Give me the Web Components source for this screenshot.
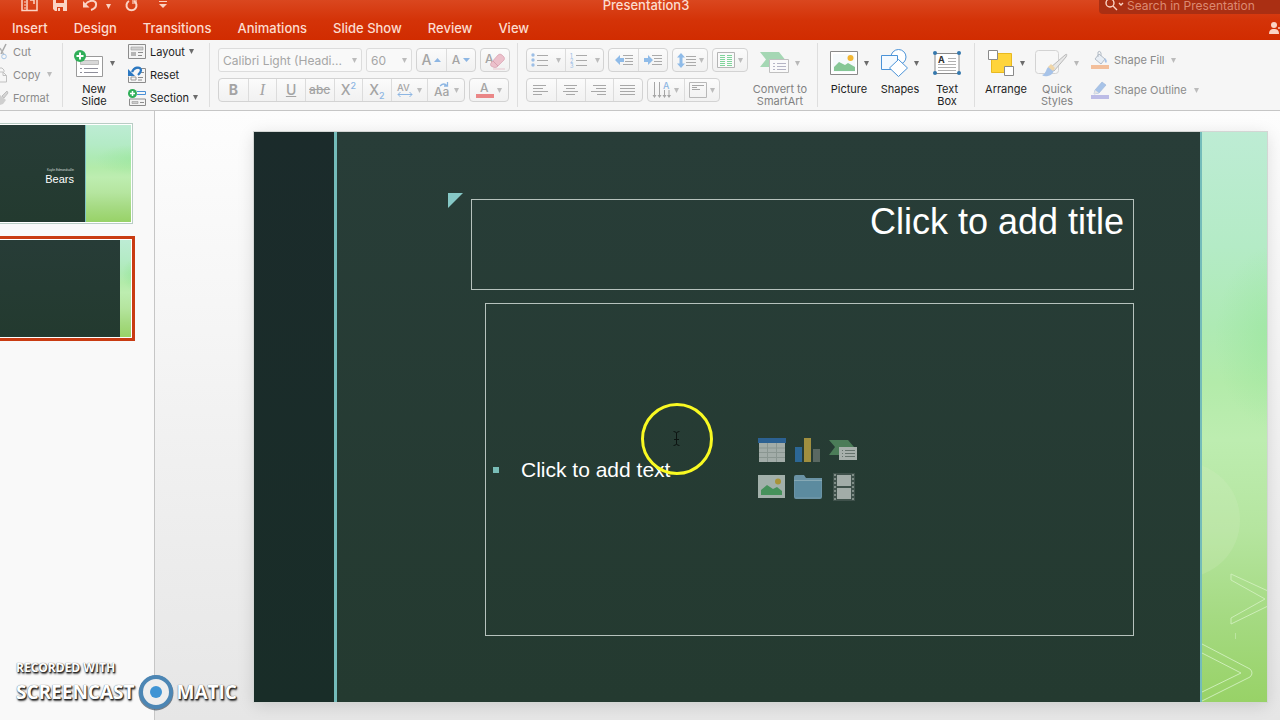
<!DOCTYPE html>
<html lang="en">
<head>
<meta charset="utf-8">
<title>Presentation3</title>
<style>
  html, body { margin: 0; min-height: 100%; }
  body { font-family: Inter, Roboto, "Liberation Sans", sans-serif; font-size: 11px; background: #f6f6f6; }
</style>
</head>
<body>
<deck-app></deck-app>
<script>
/* name: [width, height, markup] */
const ICONS = {
  caret: [5, 5, '<path d="M0 0h5L2.500 5z" fill="currentColor"/>'],
  window: [17, 12, '<path d="M1 -3h15v13.500H1zM6 -3v13.500" fill="none" stroke="#fbd3c4" stroke-width="1.500"/><path d="M3 2h2M3 5h2M3 8h2" stroke="#fbd3c4"/><path d="M9 0h4v4" stroke="#fbd3c4" stroke-width="1.500" fill="none"/>'],
  save: [14, 12, '<path d="M0 -3h14V11H2L0 9z" fill="#fbd3c4"/><path d="M3 -2h8v5H3z" fill="#d73d14"/><path d="M4 7h6v4H4z" fill="#d73d14"/><path d="M5 8h2v3H5z" fill="#fbd3c4"/>'],
  undo: [17, 12, '<path d="M1 1v6.500h6.500z" fill="#fbd3c4"/><path d="M3 5C7 -1 15 0 14 5c0 2-2 4-5 5" fill="none" stroke="#fbd3c4" stroke-width="2"/>'],
  redo: [14, 12, '<path d="M9 1a5 5 0 1 1-5 0" fill="none" stroke="#fbd3c4" stroke-width="2"/><path d="M7 -2h5v6h-5z" fill="#fbd3c4" opacity=".6"/>'],
  more: [10, 12, '<path d="M1 1.500h8" stroke="#fbd3c4"/><path d="M1 4h8L5 8z" fill="#fbd3c4"/>'],
  search: [20, 12, '<circle cx="5" cy="3" r="4" fill="none" stroke="#fbd3c4" stroke-width="1.400"/><path d="M8 6l4 4M14 3l2 2 2-2" fill="none" stroke="#fbd3c4" stroke-width="1.400"/>'],
  person: [11, 12, '<circle cx="5" cy="3" r="3" fill="#fbd3c4"/><path d="M0 12c0-4 2-5 5-5s5 1 5 5z" fill="#fbd3c4"/><path d="M9 6h3" stroke="#fbd3c4" stroke-width="1.500"/>'],
  cut: [8, 16, '<path d="M6 0L1 10" stroke="#a8a8a8" stroke-width="1.500"/><path d="M0 4l4 7" stroke="#b5b5b5" stroke-width="1.500"/><circle cx="4" cy="12.500" r="2.300" fill="none" stroke="#a9c7e6"/>'],
  copy: [8, 16, '<path d="M0 1h2l2 2v2M-2 5h5l3.500 3.500V15H-2" fill="none" stroke="#c0c0c0"/><path d="M3 5v3.500h3.500" fill="none" stroke="#c0c0c0"/>'],
  format: [8, 16, '<path d="M7 1L2 6l2 2 4-5z" fill="#d5d5d5" stroke="#b5b5b5" stroke-width=".8"/><path d="M0 5l6 5-3 4-3 1z" fill="#cfcfcf"/>'],
  newslide: [30, 27, '<path d="M2.500 6.500h26v20h-26z" fill="#fff" stroke="#9a9a9a"/><path d="M6.500 10.500h18v4h-18z" fill="#d8d8d8" stroke="#bdbdbd"/><path d="M6 18.500h2m2 0h14M6 22.500h2m2 0h14" stroke="#8e8e9a"/><circle cx="6" cy="6" r="6" fill="#2fae58"/><path d="M6 2.500v7M2.500 6h7" stroke="#fff" stroke-width="2"/>'],
  layout: [18, 15, '<path d="M.5.5h17v14H.5z" fill="#f4f4f4" stroke="#8c8c8c"/><path d="M3 3h12v3H3z" fill="#cfcfcf" stroke="#9a9a9a" stroke-width=".6"/><path d="M3 8h5v4H3z" fill="#b5b5b5"/><path d="M10 8.500h5M10 11.500h4" stroke="#8c8c8c"/>'],
  reset: [18, 17, '<path d="M5.500 2.500h12v14H.5v-6" fill="none" stroke="#8c8c8c"/><path d="M3 11h5v3H3z" fill="none" stroke="#9a9a9a"/><path d="M10 11.500h5M10 14h4M13 6.500h3" stroke="#8c8c8c"/><path d="M0 3v7h7z" fill="#2b78c2"/><path d="M4 6C6 1 12 0 13 4c0 2-1 3-3 5" fill="none" stroke="#2b78c2" stroke-width="2.200"/>'],
  section: [18, 17, '<path d="M9 2.500h8.500v3H9" fill="none" stroke="#4a90d6"/><path d="M1.500 10v6.500h16v-6.500z" fill="#f4f4f4" stroke="#8c8c8c"/><path d="M4 12.500h6v2H4z" fill="#ccc" stroke="#999" stroke-width=".6"/><path d="M12 13.500h4" stroke="#8c8c8c"/><circle cx="4.500" cy="4.500" r="4.500" fill="#2fae58"/><path d="M4.500 2v5M2 4.500h5" stroke="#fff" stroke-width="1.500"/>'],
  up: [7, 4, '<path d="M0 4h7L3.500 0z" fill="#8db6e3"/>'],
  down: [7, 4, '<path d="M0 0h7L3.500 4z" fill="#8db6e3"/>'],
  eraser: [20, 19, '<text x="0" y="12" font-size="12" font-weight="500" fill="#a4a4a4">A</text><path d="M6 12l7-8q2-2 4 0l2 2q1 2 0 3l-7 7q-2 1-4 0l-2-1q-1-1 0-3z" fill="#ecc0cb" stroke="#d7a0b0" stroke-width=".7"/><path d="M8 10l5 5" stroke="#d7a0b0"/><path d="M8 18h12" stroke="#e7c7cf"/>'],
  spacing: [17, 17, '<text x="0" y="9" font-size="9.500" font-weight="500" fill="#a4a4a4">AV</text><path d="M1 12.500h14M3.500 10L1 12.500 3.500 15M12.500 10l2.500 2.500-2.500 2.500" fill="none" stroke="#8db6e3"/>'],
  case: [17, 17, '<text x="0" y="14" font-size="12" font-weight="500" fill="#a4a4a4">Aa</text><path d="M6 4q4-4 7 0m-3 0h3.500V0" fill="none" stroke="#8db6e3" stroke-width="1.300"/>'],
  color: [18, 18, '<text x="4" y="11" font-size="12" font-weight="500" fill="#a4a4a4">A</text><path d="M0 13h18v4H0z" fill="#ea8686"/>'],
  bullets: [17, 15, '<g fill="#9dbfe6"><circle cx="2" cy="2" r="1.700"/><circle cx="2" cy="7" r="1.700"/><circle cx="2" cy="12" r="1.700"/></g><path d="M6 2.500h11M6 7.500h11M6 12.500h11" stroke="#aaa"/>'],
  numbers: [17, 15, '<g fill="#9dbfe6" font-size="5.500"><text x="0" y="4.500">1</text><text x="0" y="9.500">2</text><text x="0" y="14.500">3</text></g><path d="M6 2.500h11M6 7.500h11M6 12.500h11" stroke="#aaa"/>'],
  outdent: [18, 12, '<path d="M0 6l5-5v3h4v4H5v3z" fill="#8fbbe8"/><path d="M8 1.500h10M10 4.500h8M10 7.500h8M8 10.500h10" stroke="#aaa"/>'],
  indent: [18, 12, '<path d="M9 6L4 1v3H0v4h4v3z" fill="#8fbbe8"/><path d="M8 1.500h10M10 4.500h8M10 7.500h8M8 10.500h10" stroke="#aaa"/>'],
  leading: [19, 15, '<path d="M4 0l4 4.500H5.500v6H8L4 15 0 10.500h2.500v-6H0z" fill="#8fbbe8"/><path d="M9 3.500h10M9 6.500h10M9 9.500h10M9 12.500h10" stroke="#aaa"/>'],
  columns: [18, 16, '<path d="M.5.5h17v15H.5z" fill="#fafafa" stroke="#b5b5b5"/><path d="M3 3.500h5M3 5.500h5M3 7.500h5M3 9.500h5M3 11.500h5M3 13.500h5M10 3.500h5M10 5.500h5M10 7.500h5M10 9.500h5M10 11.500h5M10 13.500h5" stroke="#7fd49a"/>'],
  left: [16, 11, '<path d="M0 .5h13M0 3.500h10M0 6.500h15M0 9.500h9" stroke="#a8a8a8"/>'],
  center: [16, 11, '<path d="M1 .5h13M3 3.500h9M0 6.500h15M3 9.500h9" stroke="#a8a8a8"/>'],
  right: [16, 11, '<path d="M2 .5h13M5 3.500h10M0 6.500h15M6 9.500h9" stroke="#a8a8a8"/>'],
  justify: [16, 11, '<path d="M0 .5h15M0 3.500h15M0 6.500h15M0 9.500h15" stroke="#a8a8a8"/>'],
  direction: [19, 18, '<path d="M2.500 1v15M7.500 1v15M12.500 9v7M17 9v7" stroke="#a6a6a6"/><path d="M.5 14h4l-2 3zM5.500 14h4l-2 3zM10.500 14h4l-2 3zM15 14h4l-2 3z" fill="#a6a6a6"/><text x="11" y="8" font-size="9" fill="#8db6e3">A</text>'],
  valign: [18, 16, '<path d="M.5.500h17v15H.5z" fill="none" stroke="#b8b8b8"/><path d="M3 3.500h12M3 5.500h5M3 7.500h8" stroke="#a6a6a6"/>'],
  smartart: [29, 22, '<path d="M0 0h19l6 7.500L19 15H0l6-7.500z" fill="#a5d7b4"/><path d="M9.500 7.500h19v13h-19z" fill="#fafafa" stroke="#c0c0c0"/><path d="M13 11.500h2m2 0h9M13 14.500h2m2 0h9M13 17.500h2m2 0h9" stroke="#b5b5c5"/>'],
  picture: [28, 25, '<path d="M.5.5h27v23H.5z" fill="#fff" stroke="#8a8a8a"/><path d="M3 3h22v18H3z" fill="#f6fafc"/><path d="M4 20v-4l5-5 6 3 3-2 7 4v4z" fill="#86c796"/><circle cx="20.500" cy="7" r="3" fill="#f2b632"/>'],
  shapes: [27, 28, '<g fill="#fff" stroke="#4b93d8"><circle cx="17.500" cy="8" r="7.500"/><path d="M.5 6.500h16v14H.5z" fill="#f5faff"/><path d="M17.500 10.500l9 8.500-9 8.500-9-8.500z"/></g>'],
  textbox: [28, 24, '<path d="M2 2.500h24v20H2z" fill="#fff" stroke="#8a8a8a"/><path d="M15 7.500h8M15 10.500h8M5 13.500h18M5 16.500h18M5 19.500h18" stroke="#b0b0b0"/><text x="5" y="12" font-size="9" font-weight="700" fill="#333">A</text><g fill="#3578ad"><circle cx="2" cy="2" r="2"/><circle cx="26" cy="2" r="2"/><circle cx="2" cy="22" r="2"/><circle cx="26" cy="22" r="2"/></g>'],
  arrange: [26, 26, '<path d="M3.500 3.500h20v19h-20z" fill="#ffd43b" stroke="#e8b920"/><path d="M.5.500h9v9h-9zM16.500 16.500h9v9h-9z" fill="#fff" stroke="#8a8a8a"/>'],
  quick: [33, 28, '<rect x=".5" y="1.500" width="23" height="23" rx="3" fill="#f7f7f7" stroke="#d3d3d3"/><path d="M30 6q3-2 1 2l-12 14-4-3z" fill="#e7e7e7" stroke="#b9b9b9"/><path d="M15 17l4 4q-1 5-6 6-4 1-6-1 3-1 4-4 1-4 4-5z" fill="#a7c3e8"/><path d="M16 15l4 4-2 3-5-4z" fill="#f0d6a8"/>'],
  fill: [18, 19, '<path d="M8 3l6 5-4 5-6-5z" fill="#e8eef5" stroke="#b3bcc6"/><path d="M7 6V1q2-2 3 1v3" fill="none" stroke="#b3bcc6"/><path d="M14 7q3 3 1 5-2-1-1-5z" fill="#a7c3e8"/><path d="M0 14h18v4H0z" fill="#f3bf9b"/>'],
  outline: [18, 19, '<path d="M4 9l7-8 4 3-7 8-5 1z" fill="#a7c3e8" stroke="#9bb4d6" stroke-width=".6"/><path d="M3 13l1-4 4 3z" fill="#e5e5e5"/><path d="M0 14h18v4H0z" fill="#bcbce6"/>'],
  table: [28, 25, '<path d="M1 5h26v19H1z" fill="#a2aca8"/><path d="M1 10h26M1 14.500h26M1 19.500h26M9.500 5v19M18.500 5v19" stroke="#8a9691"/><path d="M0 0h28v5H0z" fill="#2c6192"/>'],
  chart: [26, 25, '<path d="M0 9h7v15H0z" fill="#2c6795"/><path d="M9 0h7v24H9z" fill="#a08f3f"/><path d="M18 11h7v13h-7z" fill="#5a6862"/>'],
  smart: [29, 21, '<path d="M0 0h19l6 7-6 8H0l6-8z" fill="#4b7c58"/><path d="M10 7h18v13H10z" fill="#a7b0ac"/><path d="M13 10.500h1m2 0h10M13 13.500h1m2 0h10M13 16.500h1m2 0h10" stroke="#65736d"/>'],
  image: [27, 23, '<path d="M0 0h27v23H0z" fill="#a2b0aa"/><path d="M3 20v-5l6-5 6 4 4-2 5 4v4z" fill="#46915b"/><circle cx="20" cy="6.500" r="3" fill="#a89338"/>'],
  folder: [28, 24, '<path d="M0 2q0-2 2-2h8l2 3h16v19q0 2-2 2H2q-2 0-2-2z" fill="#6a93a5"/><path d="M1 6h26v16H1z" fill="#5c8b9f"/><path d="M0 5.500h28" stroke="#86a9b5"/>'],
  film: [22, 28, '<path d="M0 0h22v28H0z" fill="#3f514b"/><path d="M4 2h14v11H4zM4 15h14v11H4z" fill="#a2aca8"/><path d="M2 1v27M20 1v27" stroke="#7f8d87" stroke-width="2" stroke-dasharray="2 2"/>']
};
const icon = n => `<svg class="i" width="${ICONS[n][0]}" height="${ICONS[n][1]}" viewBox="0 0 ${ICONS[n][0]} ${ICONS[n][1]}" aria-hidden="true">${ICONS[n][2]}</svg>`;
const BASE = `<style>
  *{box-sizing:border-box} svg{display:block;flex:none;overflow:visible}
  button{font:inherit;color:inherit;background:none;border:0;padding:0;margin:0}
</style>`;
const define = (tag, render) => customElements.define(tag, class extends HTMLElement {
  connectedCallback() {
    if (this.shadowRoot) return;
    this.attachShadow({ mode: 'open' }).innerHTML = BASE + render(this);
  }
});

define('app-header', () => `<style>
  :host{display:block;background:linear-gradient(#da471f,#d43308 50%,#d12c00);color:#fcdccf;font-size:13px;font-weight:500;overflow:hidden}
  .top{display:grid;grid-template-columns:1fr auto 1fr;height:16px;padding-left:12px}
  .quick{display:flex;padding-left:9px;align-items:flex-start;color:#fbd3c4}
  .quick button{display:block;height:12px;margin-right:15px}
  .quick .tight{margin-right:7px}
  .quick .drop{margin:3px 14px 0 0;height:6px}
  .quick .far{margin-right:19px}
  h1{margin:0;font:inherit;line-height:10px}
  .search{justify-self:end;width:181px;height:14px;display:flex;align-items:flex-start;gap:2px;padding-left:6px;background:#aa2f13;border-radius:0 0 0 4px}
  input{flex:1;min-width:0;border:0;padding:0;background:none;font:inherit;font-size:12px;font-weight:400;line-height:10px;height:11px;color:#fff;outline:0}
  input::placeholder{color:#dc8a72;opacity:1}
  nav{display:flex;height:24px;align-items:center;padding-left:12px;gap:26px}
  nav a{color:inherit;text-decoration:none;line-height:24px}
  .share{margin-left:auto}
</style>
<div class="top"><div class="quick">
  <button aria-label="View">${icon('window')}</button><button aria-label="Save">${icon('save')}</button>
  <button class="tight" aria-label="Undo">${icon('undo')}</button><button class="drop" aria-label="Undo list">${icon('caret')}</button>
  <button class="far" aria-label="Redo">${icon('redo')}</button><button aria-label="Customize">${icon('more')}</button></div>
  <h1>Presentation3</h1>
  <label class="search">${icon('search')}<input type="search" placeholder="Search in Presentation" aria-label="Search in Presentation"></label></div>
<nav>${['Insert','Design','Transitions','Animations','Slide Show','Review','View'].map(t => `<a href="#">${t}</a>`).join('')}
  <button class="share" aria-label="Share">${icon('person')}</button></nav>`);

define('tool-group', () => `<style>
  :host{display:flex;flex:0 0 auto;border-right:1px solid transparent;border-image:linear-gradient(transparent 4px,#dedede 4px,#dedede 66px,transparent 66px) 1}
  :host([last]){border-image:none;flex:1 1 auto}
</style><slot></slot>`);

define('big-tool', el => `<style>
  :host{display:block;flex:none}
  button{width:100%;display:flex;flex-direction:column;align-items:center;color:#1e1e1e}
  :host([off]) button{color:#828282}
  .art{display:flex;height:43px;align-items:center;gap:6px;padding-top:3px}
  .art .d{color:#6c6c6c} :host([off]) .d{color:#b8b8b8}
  .text{line-height:12px;text-align:center}
</style><button><span class="art">${icon(el.getAttribute('icon'))}${el.hasAttribute('plain') ? '' : `<span class="d">${icon('caret')}</span>`}</span><span class="text"><slot></slot></span></button>`);

define('row-tool', el => `<style>
  :host{display:block}
  button{display:flex;align-items:center;gap:var(--gap,4px);height:var(--row,23px);color:#1e1e1e;line-height:16px}
  :host([off]) button{color:#8b8b8b}
  .d{color:#6c6c6c} :host([off]) .d{color:#bcbcbc;padding-left:2px}
</style><button>${icon(el.getAttribute('icon'))}<span><slot></slot></span>${el.hasAttribute('menu') ? `<span class="d">${icon('caret')}</span>` : ''}</button>`);

/* A joined run of buttons; each child of the slot is one cell. */
define('tool-strip', () => `<style>
  :host{display:flex;height:24px;border:1px solid #d3d3d3;border-radius:4px;background:linear-gradient(#fbfbfb,#f1f1f1)}
</style><slot></slot>`);
define('tool-cell', el => `<style>
  :host{display:block;flex:1 1 var(--cell,28px);border-left:1px solid #dcdcdc}
  :host(:first-child){border-left:0}
  button{display:flex;width:100%;height:22px;align-items:center;justify-content:center;gap:var(--gap,3px);color:#a4a4a4;font-size:14px;font-weight:500;line-height:20px}
  .d{color:#bcbcbc}
</style><button aria-label="${el.getAttribute('name')}"><slot></slot>${el.hasAttribute('icon') ? icon(el.getAttribute('icon')) : ''}${el.hasAttribute('menu') ? `<span class="d">${icon('caret')}</span>` : ''}</button>`);

define('tool-combo', el => `<style>
  :host{display:block;position:relative}
  select{appearance:none;width:100%;height:24px;border:1px solid #dcdcdc;border-radius:3px;background:#f9f9f9;color:#a6a6a6;font:inherit;font-size:12px;padding:0 14px 0 4px;opacity:1}
  .d{position:absolute;right:5px;top:10px;color:#bcbcbc;pointer-events:none}
</style><select aria-label="${el.getAttribute('name')}"><option>${el.getAttribute('value')}</option></select><span class="d">${icon('caret')}</span>`);

const cell = (name, ic, extra = '', inner = '') => `<tool-cell name="${name}" ${ic ? `icon="${ic}"` : ''} ${extra}>${inner}</tool-cell>`;
define('ribbon-bar', () => `<style>
  :host{display:flex;height:71px;background:#f6f6f6;border-bottom:1px solid #c6c6c6;overflow:hidden}
  .rows{display:grid;grid-template-rows:repeat(3,23px);align-content:start}
  .two{display:grid;grid-template-rows:24px 24px;row-gap:6px;padding-top:8px;align-content:start}
  .line{display:flex;gap:4px}
  .clip{width:63px;--gap:5px}.slides{width:147px;padding-left:4px;gap:7px}
  .font{width:308px;padding-left:8px}.para{width:300px;padding-left:8px;gap:4px}
  .ins{width:157px;padding-left:6px;gap:1px}.arr{padding-left:6px}
  .fill{display:grid;grid-template-rows:30px 30px;padding:5px 0 0 8px;align-content:start;--row:30px;--gap:5px}
  .w56{width:56px}.w54{width:54px}.w52{width:52px}.w50{width:50px}.w42{width:42px}
  .a144{width:144px}.a46{width:46px}.a60{width:60px}.a30{width:30px}.a247{width:247px}.a40{width:40px}
  .a78{width:78px;--gap:8px}.a36{width:36px}.a117{width:117px}.a73{width:73px}
  .wide{--cell:36px}
  i{font-family:"Liberation Serif",serif;font-size:16px} b{font-weight:700} s{font-size:12px}
  sup,sub{font-size:9px;line-height:0;color:#8db6e3}
  .sm{font-size:12px}
</style>
<tool-group class="clip"><div class="rows"><row-tool icon="cut" off>Cut</row-tool><row-tool icon="copy" off menu>Copy</row-tool><row-tool icon="format" off>Format</row-tool></div></tool-group>
<tool-group class="slides"><big-tool class="w54" icon="newslide">New<br>Slide</big-tool>
  <div class="rows"><row-tool icon="layout" menu>Layout</row-tool><row-tool icon="reset">Reset</row-tool><row-tool icon="section" menu>Section</row-tool></div></tool-group>
<tool-group class="font"><div class="two">
  <div class="line"><tool-combo class="a144" name="Font" value="Calibri Light (Headi..."></tool-combo><tool-combo class="a46" name="Font size" value="60"></tool-combo>
    <tool-strip class="a60">${cell('Grow font','up','','A')}${cell('Shrink font','down','','<span class="sm">A</span>')}</tool-strip>
    <tool-strip class="a30">${cell('Clear formatting','eraser')}</tool-strip></div>
  <div class="line"><tool-strip class="a247">${cell('Bold','','','<b>B</b>')}${cell('Italic','','','<i>I</i>')}${cell('Underline','','','<u>U</u>')}${cell('Strikethrough','','','<s>abc</s>')}${cell('Superscript','','','<span>X<sup>2</sup></span>')}${cell('Subscript','','','<span>X<sub>2</sub></span>')}${cell('Character spacing','spacing','menu class="wide"')}${cell('Change case','case','menu class="wide"')}</tool-strip>
    <tool-strip class="a40">${cell('Font color','color','menu')}</tool-strip></div>
</div></tool-group>
<tool-group class="para"><div class="two">
  <div class="line"><tool-strip class="a78">${cell('Bullets','bullets','menu')}${cell('Numbering','numbers','menu')}</tool-strip>
    <tool-strip class="a60">${cell('Decrease indent','outdent')}${cell('Increase indent','indent')}</tool-strip>
    <tool-strip class="a36">${cell('Line spacing','leading','menu')}</tool-strip><tool-strip class="a36">${cell('Columns','columns','menu')}</tool-strip></div>
  <div class="line"><tool-strip class="a117">${cell('Align left','left')}${cell('Center','center')}${cell('Align right','right')}${cell('Justify','justify')}</tool-strip>
    <tool-strip class="a73">${cell('Text direction','direction','menu')}${cell('Align text','valign','menu')}</tool-strip></div>
</div><big-tool class="w56" icon="smartart" off>Convert to<br>SmartArt</big-tool></tool-group>
<tool-group class="ins"><big-tool class="w50" icon="picture">Picture</big-tool><big-tool class="w50" icon="shapes">Shapes</big-tool><big-tool class="w42" icon="textbox" plain>Text<br>Box</big-tool></tool-group>
<tool-group class="arr" last><big-tool class="w50" icon="arrange">Arrange</big-tool><big-tool class="w52" icon="quick" off>Quick<br>Styles</big-tool>
  <div class="fill"><row-tool icon="fill" off menu>Shape Fill</row-tool><row-tool icon="outline" off menu>Shape Outline</row-tool></div></tool-group>`);

/* The pale green artwork at the right side of every slide. */
define('leaf-band', el => `<style>
  :host{display:block;position:relative;overflow:hidden;background:radial-gradient(ellipse 90% 16% at 110% 36%,#93e59680 0,transparent 100%),linear-gradient(#bdecd4,#b4ebc6 20%,#aeeab4 34%,#b3ebaa 44%,#bdedb0 54%,#b5e59f 70%,#a5da82 85%,#98d267)}
  svg{position:absolute;left:0;bottom:0}
</style>${el.hasAttribute('lines') ? `<svg width="66" height="250" viewBox="0 0 66 250" aria-hidden="true"><circle cx="-20" cy="68" r="58" fill="#d8eec4" opacity=".22"/><g fill="none" stroke="#cdeeb8"><path d="M66 139L29 122v6l34 19-34 19v6l37-18"/><path d="M0 192l48 25q4 4 0 8L0 249M0 201l39 20L0 240"/></g><path d="M33.500 181v6" stroke="#cdeeb8" opacity=".6"/></svg>` : ''}`);

define('slide-thumb', el => `<style>
  :host{display:block;border:1px solid #b9cdc5;border-left:0;padding:1px 1px 1px 0;background:#fff}
  :host([current]){border:3px solid #c93b12;border-left:0}
  .page{display:grid;grid-template-columns:1fr var(--band,46px);height:97px;background:linear-gradient(#273c37,#233a2f)}
  leaf-band{border-left:1px solid #7fc4c4}
  :host([current]) leaf-band{border-left:0}
  .text{display:flex;flex-direction:column;align-items:flex-end;justify-content:center;padding:5px 11px 0 0;color:#fff;font:11px/12px "Liberation Sans",sans-serif}
</style><div class="page"><div class="text"><slot></slot></div><leaf-band></leaf-band></div>`);

define('slide-pane', () => `<style>
  :host{display:block;width:155px;flex:none;border-right:1px solid #c6c6c6;background:#f9f9f9;padding-top:12px}
  slide-thumb{width:133px}
  slide-thumb + slide-thumb{width:135px;margin-top:12px;--band:11px}
  small{font-size:3px;line-height:6px;color:#d0dad6}
</style><slide-thumb><small>Kaylin Edmondsallin</small><span>Bears</span></slide-thumb><slide-thumb current></slide-thumb>`);

define('slide-canvas', () => `<style>
  :host{display:grid;grid-template-columns:80px 3px minmax(0,1fr) 2px 65px;flex:1;background:linear-gradient(#283d38,#243a30);box-shadow:0 0 0 1px #d3d6d4,0 3px 16px #0002;color:#fff;font-family:"Liberation Sans",sans-serif}
  .dark{background:linear-gradient(#1b2b2b,#192d28)} .teal{background:#74bcba}
  main{display:grid;grid-template-rows:91px minmax(0,1fr);row-gap:13px;padding:67px 66px 66px 134px;position:relative}
  .mark{position:absolute;left:111px;top:61px;width:15px;height:15px;background:#86c8c6;clip-path:polygon(0 0,100% 0,0 100%)}
  h2,.body{border:1px solid #b6c2bd;margin:0}
  h2{font-size:36px;line-height:40px;font-weight:400;text-align:right;padding:2px 9px}
  .body{margin-left:14px;display:grid;align-items:center;position:relative}
  ul{list-style:none;margin:0;padding:0 0 0 7px;font-size:21px;line-height:24px}
  li{display:flex;align-items:center;gap:22px}
  li::before{content:"";width:6px;height:6px;background:#79bdb7}
  .add{position:absolute;top:calc(50% - 37px);left:calc(50% - 56px);display:grid;grid-template-columns:36px 36px 36px;grid-template-rows:36px 36px}
  .add button{display:grid;place-items:center}
</style><div class="dark"></div><div class="teal"></div>
<main><span class="mark"></span><h2>Click to add title</h2>
<div class="body"><ul><li>Click to add text</li></ul><div class="add">${[['Table','table'],['Chart','chart'],['SmartArt','smart'],['Picture','image'],['File','folder'],['Video','film']].map(([n, i]) => `<button aria-label="Insert ${n}">${icon(i)}</button>`).join('')}</div></div></main>
<div class="teal"></div><leaf-band lines></leaf-band>`);

define('pointer-ring', () => `<style>
  :host{display:block;position:absolute;left:641px;top:403px;width:72px;height:72px;pointer-events:none}
</style><svg width="72" height="72" viewBox="0 0 72 72" aria-hidden="true"><circle cx="36" cy="36" r="34.500" fill="none" stroke="#f9f922" stroke-width="3"/><path d="M32.500 28.500q3 0 3 2 0-2 3-2M35.500 30v11M32.500 42.500q3 0 3-2 0 2 3 2M33 36.500h5" fill="none" stroke="#0c1411"/></svg>`);

define('recorder-badge', () => `<style>
  :host{display:block;position:absolute;left:16px;bottom:10px;color:#fff;font-family:"Open Sans","Noto Sans",sans-serif;font-weight:700;text-shadow:0 0 1px #444,1px 1px 1px #222,1px 2px 2px #444;pointer-events:none}
  small{display:block;font-size:12px;line-height:12px}
  div{display:flex;align-items:center;gap:3px;font-size:19px;line-height:36px}
</style><small>RECORDED WITH</small><div><span>SCREENCAST</span><svg width="36" height="36" viewBox="0 0 36 36" aria-hidden="true"><circle cx="18" cy="19" r="15" fill="none" stroke="#28384a" stroke-width="5" opacity=".6"/><circle cx="18" cy="18" r="15" fill="#eee" stroke="#4c86b4" stroke-width="4"/><circle cx="18" cy="18" r="6" fill="#3f94d4"/></svg><span>MATIC</span></div>`);

define('deck-app', () => `<style>
  :host{display:flex;flex-direction:column;min-height:100vh;position:relative}
  .work{display:flex;flex:1}
  .stage{display:flex;flex:1;min-width:0;padding:21px 13px 18px 99px;background:linear-gradient(#fdfdfd,#f3f3f3 45%,#e6e6e6)}
</style><app-header></app-header><ribbon-bar></ribbon-bar>
<div class="work"><slide-pane></slide-pane><div class="stage"><slide-canvas></slide-canvas></div></div>
<pointer-ring></pointer-ring><recorder-badge></recorder-badge>`);
</script>
</body>
</html>
